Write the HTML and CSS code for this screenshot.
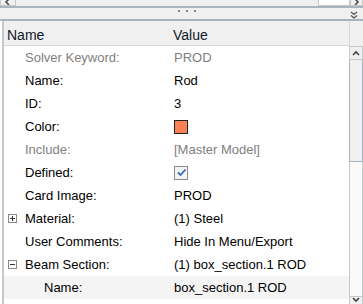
FILE: index.html
```html
<!DOCTYPE html>
<html>
<head>
<meta charset="utf-8">
<link rel="stylesheet" href="styles.css">
</head>
<body>
<div class="app">
  <div class="hscroll">
    <div class="hbtn left"><svg width="8" height="6" viewBox="0 0 8 6"><path d="M5 0 L2 3 L5 6" fill="none" stroke="#444" stroke-width="1.5"/></svg></div>
    <div class="htrack"></div>
    <div class="hthumb"></div>
    <div class="hbtn right"><svg width="8" height="6" viewBox="0 0 8 6"><path d="M2 0 L5 3 L2 6" fill="none" stroke="#444" stroke-width="1.5"/></svg></div>
  </div>
  <div class="splitter">
    <div class="dots"><span></span><span></span><span></span></div>
    <svg class="chev" width="8" height="8" viewBox="0 0 8 8"><path d="M1 1 L4 3.5 L7 1 M1 4.5 L4 7 L7 4.5" fill="none" stroke="#555" stroke-width="1.3"/></svg>
  </div>
  <div class="panel">
    <div class="main">
      <div class="header">
        <div class="hname">Name</div>
        <div class="hvalue">Value</div>
      </div>
      <div class="rows">
        <div class="row dim"><div class="lbl">Solver Keyword:</div><div class="val">PROD</div></div>
        <div class="row"><div class="lbl">Name:</div><div class="val">Rod</div></div>
        <div class="row"><div class="lbl">ID:</div><div class="val">3</div></div>
        <div class="row"><div class="lbl">Color:</div><div class="val"><span class="swatch"></span></div></div>
        <div class="row dim"><div class="lbl">Include:</div><div class="val">[Master Model]</div></div>
        <div class="row"><div class="lbl">Defined:</div><div class="val"><span class="check"><svg width="11" height="11" viewBox="0 0 11 11"><path d="M2 5.5 L4.5 8 L9.5 2.5" fill="none" stroke="#2f6fb0" stroke-width="1.8"/></svg></span></div></div>
        <div class="row"><div class="lbl">Card Image:</div><div class="val">PROD</div></div>
        <div class="row"><div class="lbl"><span class="exp"><svg width="9" height="9" viewBox="0 0 9 9"><rect x="0.5" y="0.5" width="8" height="8" fill="#fff" stroke="#8a8a8a"/><path d="M2 4.5 H7 M4.5 2 V7" stroke="#333"/></svg></span>Material:</div><div class="val">(1) Steel</div></div>
        <div class="row"><div class="lbl">User Comments:</div><div class="val">Hide In Menu/Export</div></div>
        <div class="row"><div class="lbl"><span class="exp"><svg width="9" height="9" viewBox="0 0 9 9"><rect x="0.5" y="0.5" width="8" height="8" fill="#fff" stroke="#8a8a8a"/><path d="M2 4.5 H7" stroke="#333"/></svg></span>Beam Section:</div><div class="val">(1) box_section.1 ROD</div></div>
        <div class="row sel"><div class="lbl sub">Name:</div><div class="val">box_section.1 ROD</div></div>
      </div>
    </div>
    <div class="vscroll">
      <div class="vhead"></div>
      <div class="vbtn"><svg width="8" height="6" viewBox="0 0 8 6"><path d="M1 5 L4 2 L7 5" fill="none" stroke="#444" stroke-width="1.6"/></svg></div>
      <div class="vthumb"></div>
      <div class="vtrack"></div>
      <div class="vbtn down"><svg width="8" height="6" viewBox="0 0 8 6"><path d="M1 1 L4 4 L7 1" fill="none" stroke="#444" stroke-width="1.6"/></svg></div>
    </div>
  </div>
</div>
</body>
</html>
```

FILE: styles.css
```css
* { box-sizing: border-box; }
html, body { margin: 0; padding: 0; }
body {
  width: 363px;
  height: 304px;
  overflow: hidden;
  background: #fff;
  font-family: "Liberation Sans", Arial, sans-serif;
  font-size: 13px;
  color: #000;
}
.app { display: flex; flex-direction: column; height: 304px; }
.hscroll {
  height: 6px;
  display: flex;
  background: #f0f0f0;
  overflow: hidden;
}
.hbtn {
  width: 16px;
  height: 6px;
  background: #f0f0f0;
  border: 1px solid #c8c8c8;
  border-top: none;
  display: flex;
  align-items: flex-end;
  justify-content: center;
  overflow: hidden;
}
.hbtn.right { width: 13px; }
.htrack { flex: 1; }
.hthumb { width: 32px; background: #fff; border: 1px solid #c8c8c8; border-top: none; }
.splitter {
  height: 15px;
  background: #f0f0f0;
  border-top: 2px solid #a9b4bf;
  border-bottom: 2px solid #a9b4bf;
  position: relative;
  display: flex;
  align-items: flex-start;
  justify-content: center;
}
.dots { display: flex; gap: 6px; margin-top: 2px; margin-left: 10px; }
.dots span { width: 2px; height: 2px; background: #8a8a8a; }
.chev { position: absolute; right: 5px; top: 3px; }
.panel {
  flex: 1;
  display: flex;
  border-left: 2px solid #c3c9cf;
  margin-left: 2px;
  min-height: 0;
}
.main { flex: 1; display: flex; flex-direction: column; min-width: 0; }
.header {
  height: 25px;
  background: #f0f0f0;
  border-bottom: 1px solid #d9d9d9;
  display: flex;
  align-items: center;
  font-size: 14px;
  color: #101828;
  padding-top: 4px;
}
.hname { width: 169px; padding-left: 3px; }
.hvalue { flex: 1; }
.rows { flex: 1; }
.row { height: 23px; display: flex; align-items: center; }
.lbl { width: 169px; padding-left: 21px; position: relative; white-space: nowrap; }
.lbl.sub { padding-left: 40px; }
.val { flex: 1; padding-left: 1px; white-space: nowrap; display: flex; align-items: center; }
.dim { color: #808080; }
.sel { background: #f4f4f4; }
.exp { position: absolute; left: 4px; top: 50%; margin-top: -5px; display: flex; }
.swatch {
  width: 14px; height: 14px;
  background: #ff8158;
  border: 1px solid #222;
  display: inline-block;
}
.check {
  width: 14px; height: 14px;
  border: 1px solid #8d8d8d;
  background: #f4f4f4;
  display: inline-flex;
  align-items: center;
  justify-content: center;
}
.vscroll {
  width: 14px;
  display: flex;
  flex-direction: column;
  background: #f0f0f0;
}
.vhead { height: 25px; background: #f0f0f0; border-left: 1px solid #d9d9d9; }
.vbtn {
  height: 14px;
  border: 1px solid #c3c9cf;
  display: flex;
  align-items: center;
  justify-content: center;
  background: #f0f0f0;
}
.vbtn.down { height: 8px; align-items: flex-start; border-bottom: none; }
.vthumb { height: 102px; background: #f0f0f0; border: 1px solid #a9b4bf; border-top: none; }
.vtrack { flex: 1; background: #fafafa; border-left: 1px solid #c3c9cf; border-right: 1px solid #c3c9cf; }
```
